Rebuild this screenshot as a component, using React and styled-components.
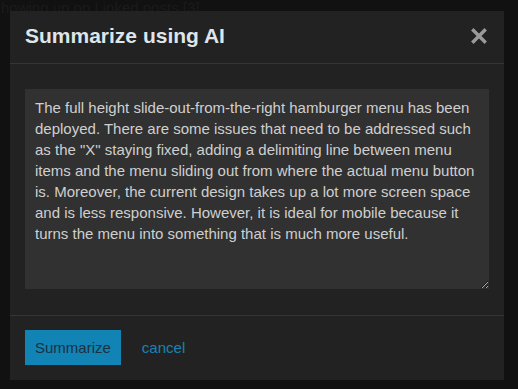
import React from "react";
import styled, { createGlobalStyle } from "styled-components";

const summary =
  'The full height slide-out-from-the-right hamburger menu has been deployed. There are some issues that need to be addressed such as the "X" staying fixed, adding a delimiting line between menu items and the menu sliding out from where the actual menu button is. Moreover, the current design takes up a lot more screen space and is less responsive. However, it is ideal for mobile because it turns the menu into something that is much more useful.';

export default function App() {
  return (
    <>
      <GlobalStyle />
      <Backdrop>
        <Faint>howing up on Linked posts [3]</Faint>
      </Backdrop>
      <Modal>
        <Header>
          <Title>Summarize using AI</Title>
          <Close aria-label="close">
            <svg width="16" height="16" viewBox="0 0 16 16">
              <path
                d="M2.5 2.5 L13.5 13.5 M13.5 2.5 L2.5 13.5"
                stroke="#9a9a9a"
                strokeWidth="3.4"
                strokeLinecap="square"
              />
            </svg>
          </Close>
        </Header>
        <Body>
          <TextBox readOnly defaultValue={summary} />
        </Body>
        <Footer>
          <PrimaryButton>Summarize</PrimaryButton>
          <LinkButton>cancel</LinkButton>
        </Footer>
      </Modal>
    </>
  );
}

const GlobalStyle = createGlobalStyle`
  html, body {
    margin: 0;
    background: #111111;
    font-family: "Liberation Sans", Arial, sans-serif;
  }
`;

const Backdrop = styled.div`
  height: 389px;
  overflow: hidden;
`;

const Faint = styled.div`
  padding-left: 1px;
  font-size: 15px;
  line-height: 16px;
  color: #1b1b1b;
`;

const Modal = styled.div`
  position: fixed;
  left: 10px;
  top: 11px;
  width: 494px;
  height: 369px;
  background: #222222;
  display: flex;
  flex-direction: column;
`;

const Header = styled.div`
  height: 53px;
  box-sizing: border-box;
  padding: 0 17px 2px 15px;
  display: flex;
  align-items: center;
  justify-content: space-between;
  border-bottom: 1px solid #353535;
`;

const Title = styled.h3`
  margin: 0;
  font-size: 21px;
  font-weight: bold;
  color: #dfe5ea;
`;

const Close = styled.button`
  border: none;
  background: none;
  padding: 0;
  width: 16px;
  height: 16px;
  display: flex;
  cursor: pointer;
`;

const Body = styled.div`
  height: 252px;
  box-sizing: border-box;
  padding: 25px 15px 0;
  border-bottom: 1px solid #353535;
`;

const TextBox = styled.textarea`
  display: block;
  width: 464px;
  height: 200px;
  box-sizing: border-box;
  margin: 0;
  padding: 8px 10px;
  border: none;
  outline: none;
  background: #313131;
  color: #cfcfcf;
  font-family: "Liberation Sans", Arial, sans-serif;
  font-size: 15px;
  line-height: 21px;
  resize: vertical;
`;

const Footer = styled.div`
  flex: 1;
  display: flex;
  align-items: flex-start;
  gap: 21px;
  padding: 14px 15px 0;
`;

const PrimaryButton = styled.button`
  height: 35px;
  padding: 0 10px;
  border: none;
  background: #1183b4;
  color: #1c3140;
  font-family: inherit;
  font-size: 15px;
  cursor: pointer;
`;

const LinkButton = styled.button`
  height: 35px;
  padding: 0;
  border: none;
  background: none;
  color: #1a82b3;
  font-family: inherit;
  font-size: 15px;
  cursor: pointer;
`;
